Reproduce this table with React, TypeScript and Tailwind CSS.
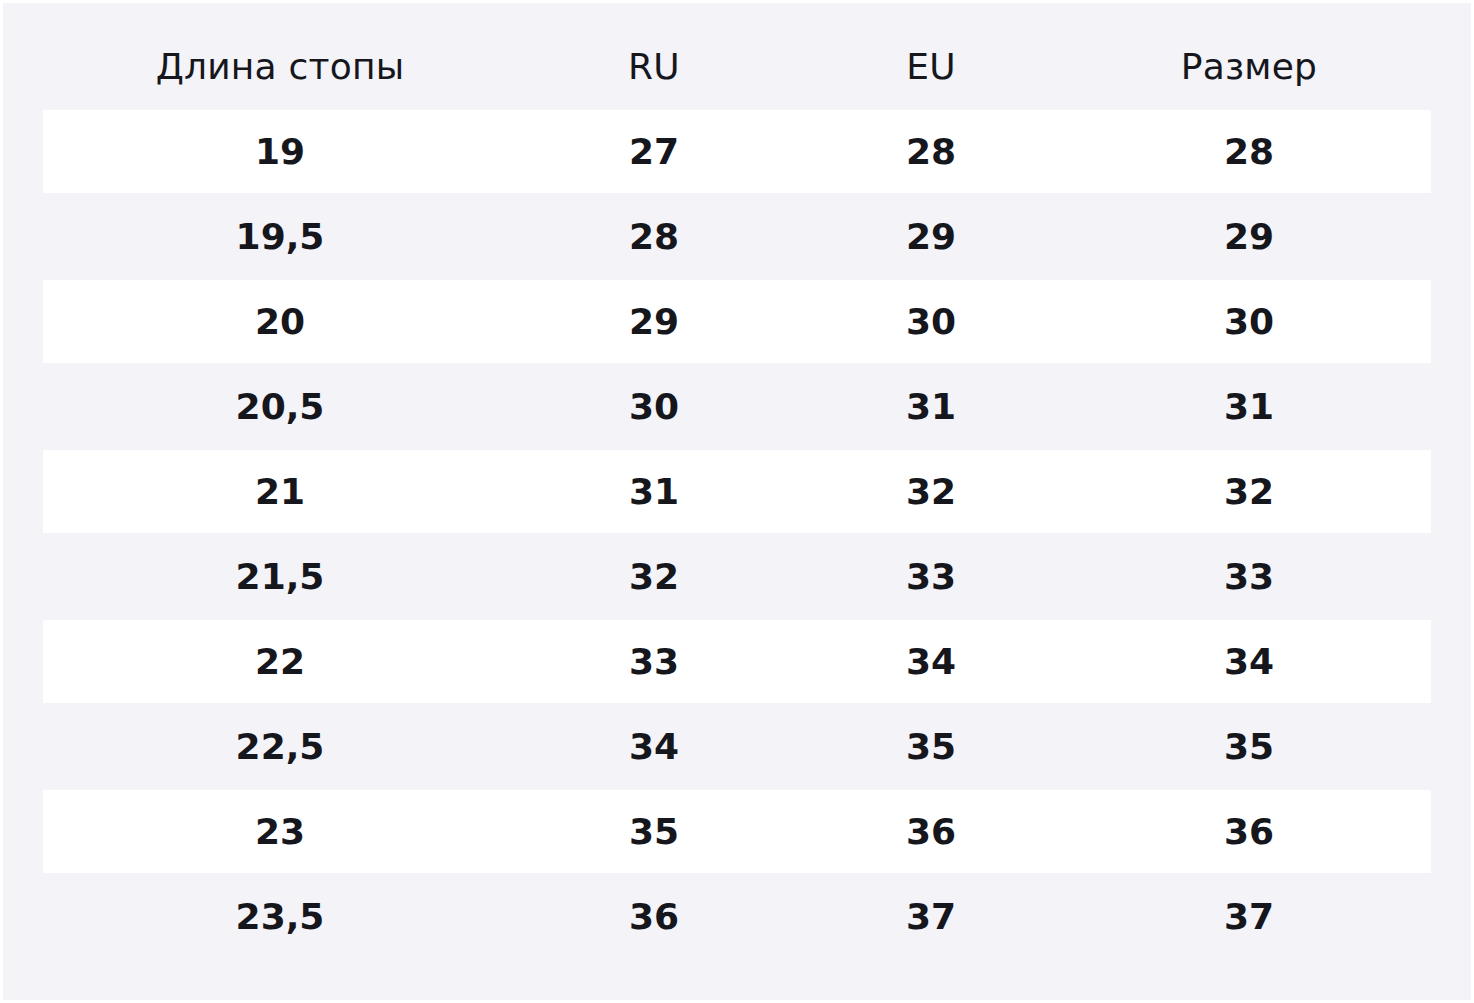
const rows: [string, string, string, string][] = [
  ["19", "27", "28", "28"],
  ["19,5", "28", "29", "29"],
  ["20", "29", "30", "30"],
  ["20,5", "30", "31", "31"],
  ["21", "31", "32", "32"],
  ["21,5", "32", "33", "33"],
  ["22", "33", "34", "34"],
  ["22,5", "34", "35", "35"],
  ["23", "35", "36", "36"],
  ["23,5", "36", "37", "37"],
];

const headers = ["Длина стопы", "RU", "EU", "Размер"];

const cols = "grid grid-cols-[474px_274px_280px_356px]";

export default function App() {
  return (
    <div className="w-[1474px] h-[1003px] bg-white p-[3px] font-['DejaVu_Sans',sans-serif] text-[#16161d]">
      <div className="w-[1468px] h-[997px] bg-[#f3f3f8] px-[40px] pt-[30px]">
        <div className={cols + " h-[77px] text-[36px] tracking-[0.2px]"}>
          {headers.map((h) => (
            <div key={h} className="flex items-start justify-center pt-[13px] leading-[42px]">
              {h}
            </div>
          ))}
        </div>
        {rows.map((r, i) => (
          <div
            key={r[0]}
            className={
              cols +
              " text-[36px] font-bold " +
              (i % 2 === 0 ? "h-[83px] bg-white" : "h-[87px]")
            }
          >
            {r.map((c, j) => (
              <div key={j} className="flex items-center justify-center">
                {c}
              </div>
            ))}
          </div>
        ))}
      </div>
    </div>
  );
}
